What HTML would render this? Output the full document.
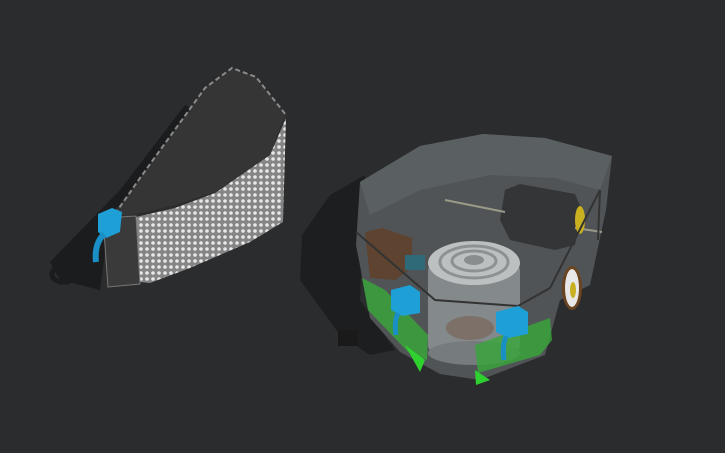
<!DOCTYPE html>
<html><head><style>html,body{margin:0;padding:0;background:#2a2c2e;}svg{display:block}</style></head>
<body>
<svg width="725" height="453" viewBox="0 0 725 453" xmlns="http://www.w3.org/2000/svg">
<rect width="725" height="453" fill="#2a2c2e"/>
<!-- left object shadow -->
<polygon points="50,262 120,190 185,105 195,110 160,160 110,215 100,290 60,280" fill="#1b1c1d"/>
<path d="M55,268 q-8,10 5,14 l10,0" stroke="#1b1c1d" stroke-width="5" fill="none"/>
<!-- lid -->
<polygon points="232,68 256,77 286,115 282,122 270,155 215,192 175,205 128,216 115,214 140,178 205,88" fill="#353535"/>
<polyline points="115,214 140,178 205,88 232,68 256,77 286,115" fill="none" stroke="#8a8a8a" stroke-width="2" stroke-dasharray="5,3"/>
<!-- perforated -->
<defs><pattern id="dots" width="6" height="6" patternUnits="userSpaceOnUse"><rect width="6" height="6" fill="#858585"/><circle cx="3" cy="3" r="1.8" fill="#e8e8e8"/></pattern></defs>
<polygon points="136,217 175,208 215,193 270,155 286,118 283,222 250,242 190,268 150,283 140,282" fill="url(#dots)"/>
<!-- front dark panel -->
<polygon points="103,218 136,216 140,284 108,287" fill="#3a3a3a" stroke="#777" stroke-width="1"/>
<!-- blue clip -->
<polygon points="98,214 112,208 122,212 120,232 106,238 98,232" fill="#1e9fd6"/>
<path d="M104,234 q-10,10 -8,28" stroke="#1a8fc5" stroke-width="6" fill="none"/>

<!-- right object shadow -->
<polygon points="302,235 330,195 365,175 360,300 395,350 370,355 340,335 300,280" fill="#1d1e1f"/>
<rect x="338" y="330" width="20" height="16" fill="#1a1a1b"/>
<!-- shell -->
<polygon points="360,182 420,146 483,134 545,138 612,156 606,210 590,285 560,300 545,355 480,380 440,374 400,352 370,318 356,245" fill="#505457"/>
<polygon points="360,182 420,146 483,134 545,138 612,156 600,190 555,178 490,175 420,190 370,215" fill="#5a5f62"/>
<!-- motor -->
<polygon points="505,190 520,184 575,194 582,210 575,245 555,250 510,240 500,220" fill="#333537"/>
<line x1="445" y1="200" x2="505" y2="212" stroke="#9a9a88" stroke-width="2"/>
<line x1="575" y1="228" x2="602" y2="232" stroke="#9a9a88" stroke-width="2"/>
<ellipse cx="580" cy="220" rx="5" ry="14" fill="#c8b020"/>
<!-- wheel -->
<ellipse cx="572" cy="288" rx="10" ry="22" fill="#6a4420"/>
<ellipse cx="572" cy="288" rx="7" ry="19" fill="#e8e8e8"/>
<ellipse cx="573" cy="290" rx="3" ry="8" fill="#c8b020"/>
<!-- brown block -->
<polygon points="365,232 382,228 412,238 412,268 395,280 370,278" fill="#5e4430"/>
<rect x="405" y="255" width="20" height="15" fill="#2f6a78"/>
<!-- cylinder -->
<rect x="428" y="263" width="92" height="90" rx="8" fill="#84898c"/>
<ellipse cx="474" cy="353" rx="46" ry="12" fill="#767b7e"/>
<ellipse cx="474" cy="263" rx="46" ry="22" fill="#bdc0c1"/>
<ellipse cx="474" cy="262" rx="34" ry="16" fill="none" stroke="#8e9192" stroke-width="3"/>
<ellipse cx="474" cy="261" rx="22" ry="10" fill="none" stroke="#8e9192" stroke-width="3"/>
<ellipse cx="474" cy="260" rx="10" ry="5" fill="#8a8d8e"/>
<ellipse cx="470" cy="328" rx="24" ry="12" fill="#7c7068"/>
<!-- edge lines of shell -->
<polyline points="356,232 435,300 518,306 550,288 600,190" fill="none" stroke="#333" stroke-width="2"/>
<line x1="600" y1="190" x2="598" y2="240" stroke="#333" stroke-width="2"/>
<!-- green panels -->
<polygon points="362,278 385,290 428,335 427,360 408,352 368,310" fill="#38a83a" opacity="0.8"/>
<polygon points="475,345 550,318 552,340 540,355 478,373" fill="#38a83a" opacity="0.8"/>
<polygon points="405,345 425,360 420,372" fill="#2fd12f"/>
<polygon points="475,370 490,380 476,385" fill="#2fd12f"/>
<!-- blue clips -->
<polygon points="391,290 410,285 420,292 420,313 402,316 391,310" fill="#1e9fd6"/>
<path d="M398,313 q-4,8 -2,22" stroke="#1a8fc5" stroke-width="5" fill="none"/>
<polygon points="496,312 518,306 528,312 528,334 508,338 496,332" fill="#1e9fd6"/>
<path d="M506,336 q-4,10 -2,24" stroke="#1a8fc5" stroke-width="5" fill="none"/>
</svg>
</body></html>
